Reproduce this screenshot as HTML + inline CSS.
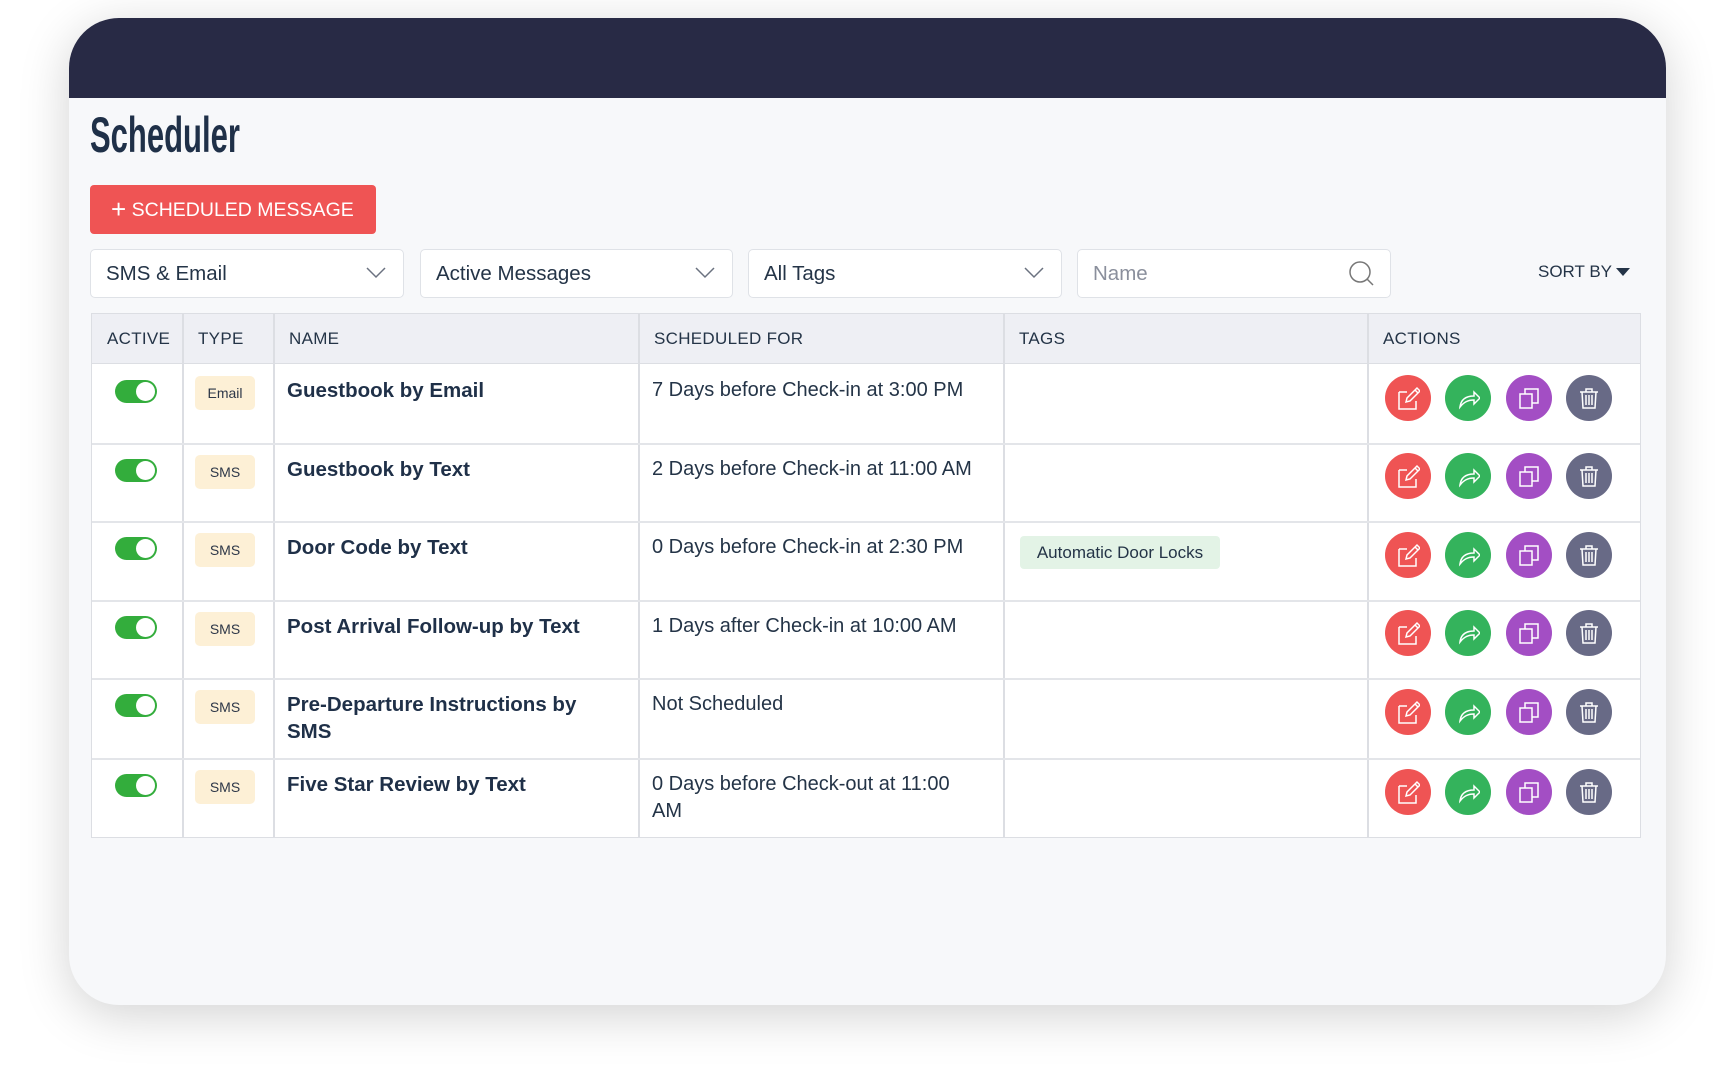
<!DOCTYPE html>
<html><head><meta charset="utf-8"><style>
*{box-sizing:border-box;margin:0;padding:0}
body{width:1736px;height:1080px;background:#fff;font-family:"Liberation Sans",sans-serif;color:#243447;position:relative;overflow:hidden}
.card{position:absolute;left:69px;top:18px;width:1597px;height:987px;border-radius:50px;background:#f7f8fa;overflow:hidden;box-shadow:0 10px 50px rgba(0,0,0,.18)}
.hdr{position:absolute;left:0;top:0;width:100%;height:80px;background:#282a45}
.a{position:absolute}
.title{left:21px;top:88px;font-family:"Liberation Sans Narrow","Liberation Sans",sans-serif;font-weight:bold;font-size:50px;color:#1f3048;transform:scaleX(.62);transform-origin:left;white-space:nowrap}
.btn{left:21px;top:167px;width:286px;height:49px;background:#ef5454;border-radius:4px;color:#fff;font-size:19.5px;line-height:49px;padding-left:21px}
.dd{top:231px;height:49px;background:#fff;border:1.5px solid #dfe2e7;border-radius:5px;font-size:20.5px;line-height:48px;padding-left:15px;color:#243447}
.dd svg{position:absolute;right:17px;top:17px}
.tbl{left:22px;top:295px;width:1550px;height:525px;background:#fff;border:1.5px solid #dcdee3}
.th{position:absolute;left:0;top:0;width:100%;height:50px;background:#eeeff4;border-bottom:1.5px solid #dcdee3}
.thx{position:absolute;top:15px;font-size:17px;color:#243447;letter-spacing:.3px}
.vl{position:absolute;top:0;width:1.5px;height:100%;background:#dcdee3}
.hl{position:absolute;left:0;width:100%;height:1.5px;background:#e3e5e9}
.tg{position:absolute;left:23px;width:42px;height:23px;border-radius:12px;background:#33ad3c}
.tg:after{content:"";position:absolute;right:2px;top:2px;width:19px;height:19px;border-radius:50%;background:#fff}
.bd{position:absolute;left:103px;width:60px;height:34px;border-radius:5px;background:#fdf0d6;font-size:14px;line-height:34px;text-align:center;color:#2d3748}
.nm{position:absolute;left:195px;font-size:20.5px;font-weight:bold;line-height:27px;color:#1f3048;width:330px}
.sc{position:absolute;left:560px;font-size:20px;line-height:27px;color:#243447;width:325px}
.ic{position:absolute;width:46px;height:46px;border-radius:50%}
.ic svg{position:absolute;left:11px;top:11px}
</style></head><body>
<div class="card">
<div class="hdr"></div>
<div class="a title">Scheduler</div>
<div class="a btn"><span style="font-size:26px;vertical-align:-2px">+</span> SCHEDULED MESSAGE</div>
<div class="a dd" style="left:21px;width:314px">SMS &amp; Email<svg width="20" height="12"><path d="M1 1l9 9 9-9" fill="none" stroke="#6b7280" stroke-width="1.5"/></svg></div>
<div class="a dd" style="left:351px;width:313px">Active Messages<svg width="20" height="12"><path d="M1 1l9 9 9-9" fill="none" stroke="#6b7280" stroke-width="1.5"/></svg></div>
<div class="a dd" style="left:679px;width:314px">All Tags<svg width="20" height="12"><path d="M1 1l9 9 9-9" fill="none" stroke="#6b7280" stroke-width="1.5"/></svg></div>
<div class="a dd" style="left:1008px;width:314px;color:#8a8f9c">Name<svg width="28" height="28" style="top:10px;right:14px"><circle cx="12" cy="12" r="10" fill="none" stroke="#777" stroke-width="1.5"/><path d="M19 19l6 6" stroke="#777" stroke-width="1.5"/></svg></div>
<div class="a" style="left:1469px;top:244px;font-size:17px;color:#243447">SORT BY <svg width="14" height="9"><path d="M0 0h14L7 8z" fill="#243447"/></svg></div>
<div class="a tbl">
<div class="th"></div>
<div class="thx" style="left:15px">ACTIVE</div>
<div class="thx" style="left:106px">TYPE</div>
<div class="thx" style="left:197px">NAME</div>
<div class="thx" style="left:562px">SCHEDULED FOR</div>
<div class="thx" style="left:927px">TAGS</div>
<div class="thx" style="left:1291px">ACTIONS</div>
<div class="vl" style="left:90px"></div><div class="vl" style="left:181px"></div><div class="vl" style="left:546px"></div><div class="vl" style="left:911px"></div><div class="vl" style="left:1275px"></div>
<div class="hl" style="top:129px"></div><div class="hl" style="top:207px"></div><div class="hl" style="top:286px"></div><div class="hl" style="top:364px"></div><div class="hl" style="top:444px"></div>
<div class="tg" style="top:66px"></div><div class="bd" style="top:62px">Email</div><div class="nm" style="top:63px">Guestbook by Email</div><div class="sc" style="top:63px">7 Days before Check-in at 3:00 PM</div>
<div class="tg" style="top:145px"></div><div class="bd" style="top:141px">SMS</div><div class="nm" style="top:142px">Guestbook by Text</div><div class="sc" style="top:142px">2 Days before Check-in at 11:00 AM</div>
<div class="tg" style="top:223px"></div><div class="bd" style="top:219px">SMS</div><div class="nm" style="top:220px">Door Code by Text</div><div class="sc" style="top:220px">0 Days before Check-in at 2:30 PM</div>
<div class="a" style="left:928px;top:222px;width:200px;height:33px;background:#e3f3e6;border-radius:4px;font-size:17px;line-height:33px;text-align:center;color:#243447">Automatic Door Locks</div>
<div class="tg" style="top:302px"></div><div class="bd" style="top:298px">SMS</div><div class="nm" style="top:299px">Post Arrival Follow-up by Text</div><div class="sc" style="top:299px">1 Days after Check-in at 10:00 AM</div>
<div class="tg" style="top:380px"></div><div class="bd" style="top:376px">SMS</div><div class="nm" style="top:377px">Pre-Departure Instructions by SMS</div><div class="sc" style="top:377px">Not Scheduled</div>
<div class="tg" style="top:460px"></div><div class="bd" style="top:456px">SMS</div><div class="nm" style="top:457px">Five Star Review by Text</div><div class="sc" style="top:457px">0 Days before Check-out at 11:00 AM</div>
</div>
</div>
<script>
var tops=[376,454,533,611,690,770];
var cols=[["#ef5454",'<path d="M3 6h8M3 6v17h17v-8" fill="none" stroke="#fff" stroke-width="1.5"/><path d="M10 16l1-4 10-10 3 3-10 10z M19 4l3 3" fill="none" stroke="#fff" stroke-width="1.5"/>'],
["#34b35c",'<path d="M4 21c1-8 6-11 14-11V6l6 6-6 6v-4c-6 0-10 2-14 7z" fill="none" stroke="#fff" stroke-width="1.5"/>'],
["#a34ec4",'<rect x="3" y="8" width="12" height="14" fill="none" stroke="#fff" stroke-width="1.5"/><path d="M8 8V3h13v14h-6" fill="none" stroke="#fff" stroke-width="1.5"/>'],
["#686a86",'<path d="M3 6h18M9 6V3h6v3M5 6l1 16h12l1-16M9 9v10M12 9v10M15 9v10" fill="none" stroke="#fff" stroke-width="1.5"/>']];
var xs=[1408,1468,1529,1589],h="";
tops.forEach(function(t){cols.forEach(function(c,i){h+='<div class="ic" style="left:'+(xs[i]-23)+'px;top:'+(t-1)+'px;background:'+c[0]+'"><svg width="24" height="24">'+c[1]+'</svg></div>';});});
document.body.insertAdjacentHTML('beforeend',h);
</script>
</body></html>
